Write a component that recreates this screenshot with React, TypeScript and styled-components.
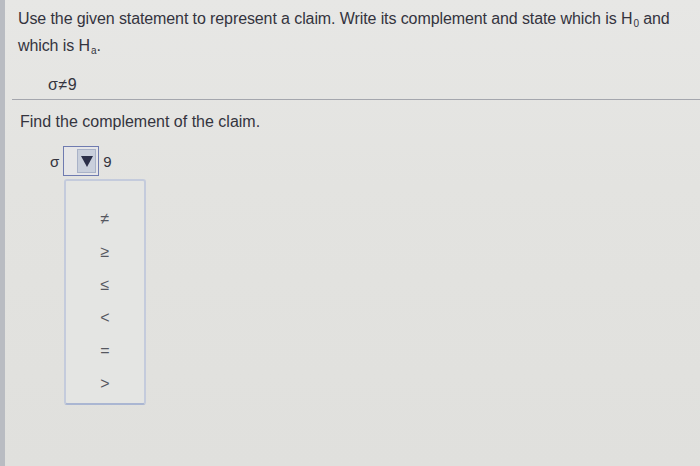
import React from 'react'
import styled, { createGlobalStyle } from 'styled-components'

const GlobalStyle = createGlobalStyle`
  html, body {
    margin: 0;
    padding: 0;
    background: #e3e3e0;
  }
  body {
    font-family: 'Liberation Sans', Arial, sans-serif;
    color: #34343e;
  }
`

const Page = styled.div`
  width: 700px;
  height: 466px;
  box-sizing: border-box;
  border-left: 5px solid #b9bcc2;
  background: linear-gradient(180deg, #e7e7e5 0%, #e3e3e0 40%, #e0e0dd 100%);
  overflow: hidden;
`

const Question = styled.div`
  padding: 5px 30px 0 13px;
  font-size: 16px;
  line-height: 27px;
  letter-spacing: -0.1px;
`

const Sub = styled.sub`
  font-size: 10px;
  line-height: 0;
  vertical-align: -3px;
  margin-left: 1px;
`

const Statement = styled.div`
  padding: 16px 0 4px 43px;
  font-size: 16px;
  line-height: 20px;
  letter-spacing: 0.5px;
`

const Divider = styled.hr`
  margin: 0 0 0 7px;
  border: none;
  border-top: 1px solid #a4a6ad;
`

const Prompt = styled.div`
  padding: 12px 0 0 15px;
  font-size: 16px;
  line-height: 20px;
`

const AnswerRow = styled.div`
  display: flex;
  align-items: center;
  gap: 4px;
  padding: 14px 0 0 45px;
  font-size: 15px;
`

const SelectBox = styled.div`
  width: 36px;
  height: 30px;
  border: 1px solid #6f7bb0;
  display: flex;
  justify-content: flex-end;
  align-items: stretch;
  padding: 2px;
  box-sizing: border-box;
  background: #e6e6e8;
`

const Arrow = styled.div`
  width: 17px;
  background: #c9cfdc;
  border: 1px solid #a9b2c8;
  display: flex;
  align-items: center;
  justify-content: center;
  &::before {
    content: '';
    border-left: 6px solid transparent;
    border-right: 6px solid transparent;
    border-top: 11px solid #2b2f4a;
  }
`

const Layout = styled.div`
  display: flex;
  padding: 3px 0 0 59px;
`

const List = styled.ul`
  list-style: none;
  margin: 0;
  padding: 28px 0 10px;
  width: 82px;
  height: 226px;
  box-sizing: border-box;
  border: 2px solid #c4cbdc;
  border-bottom-color: #aab6d2;
  border-radius: 3px;
  background: #e4e5e3;
  display: flex;
  flex-direction: column;
  align-items: center;
  gap: 13px;
`

const Option = styled.li`
  font-size: 16px;
  line-height: 20px;
  color: #55575f;
`

const symbols = ['≠', '≥', '≤', '<', '=', '>']

export default function App() {
  return (
    <>
      <GlobalStyle />
      <Page>
        <Question>
          Use the given statement to represent a claim. Write its complement and state which is H<Sub>0</Sub> and
          <br />
          which is H<Sub>a</Sub>.
        </Question>
        <Statement>σ≠9</Statement>
        <Divider />
        <Prompt>Find the complement of the claim.</Prompt>
        <AnswerRow>
          <span>σ</span>
          <SelectBox>
            <Arrow />
          </SelectBox>
          <span>9</span>
        </AnswerRow>
        <Layout>
          <List>
            {symbols.map(s => (
              <Option key={s}>{s}</Option>
            ))}
          </List>
        </Layout>
      </Page>
    </>
  )
}
